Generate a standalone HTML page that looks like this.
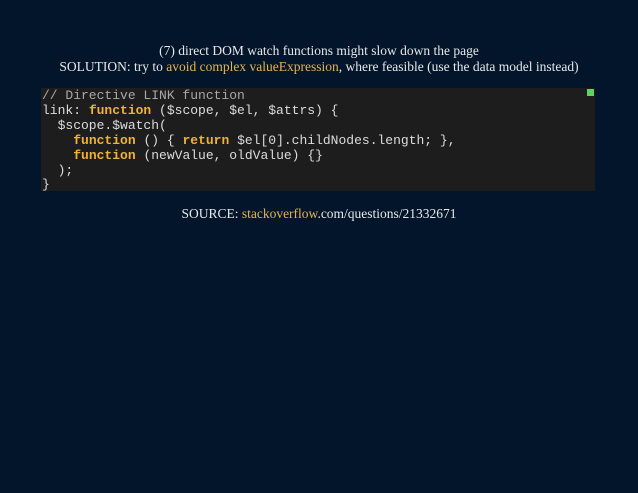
<!DOCTYPE html>
<html><head><meta charset="utf-8"><style>
body{margin:0;width:638px;height:493px;background:#02152a;overflow:hidden;position:relative;font-family:"Liberation Serif",serif;color:#e8e8e8}
.t{position:absolute;left:0;width:638px;text-align:center;font-size:13.5px;white-space:nowrap}
.o{color:#e6b450}
.code{position:absolute;left:41px;top:88px;width:554px;height:103px;background:#1d1d1d}
pre{margin:0;position:absolute;left:42px;top:89px;font-family:"Liberation Mono",monospace;font-size:13px;line-height:14.9px;color:#dcdcdc}
.k{color:#f0b232;font-weight:bold}
.c{color:#a8a8a8}
.g{position:absolute;left:587px;top:89px;width:7px;height:7px;background:#5fd35f}
</style></head><body>
<div class="t" style="top:43px">(7) direct DOM watch functions might slow down the page</div>
<div class="t" style="top:59px">SOLUTION: try to <span class="o">avoid complex valueExpression</span>, where feasible (use the data model instead)</div>
<div class="code"></div>
<div class="g"></div>
<pre><span class="c">// Directive LINK function</span>
link: <span class="k">function</span> ($scope, $el, $attrs) {
  $scope.$watch(
    <span class="k">function</span> () { <span class="k">return</span> $el[0].childNodes.length; },
    <span class="k">function</span> (newValue, oldValue) {}
  );
}</pre>
<div class="t" style="top:206px">SOURCE: <span class="o">stackoverflow</span>.com/questions/21332671</div>
</body></html>
